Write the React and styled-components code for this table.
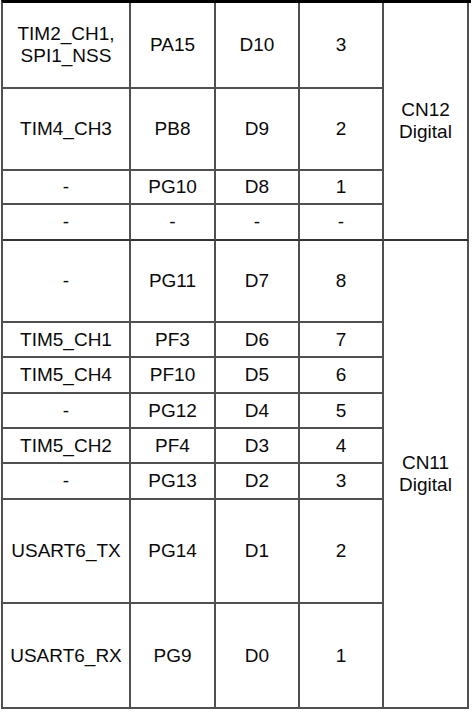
import styled, { createGlobalStyle } from 'styled-components';

const GlobalStyle = createGlobalStyle`
    body {
        margin: 0;
        background: #fff;
        font-family: 'Liberation Sans', Arial, sans-serif;
    }
`;

const PinTable = styled.div`
    display: grid;
    grid-template-columns: 128px 85px 84px 84px 85px;
    grid-template-rows: 86px 82px 34px 36px 82px 35px 36px 35px 35px 36px 104px 105px;
    width: 468px;
    margin-left: 1px;
    border-top: 3px solid #000;
    border-left: 2px solid #505050;
    box-sizing: content-box;
`;

const Cell = styled.div`
    display: flex;
    align-items: center;
    justify-content: center;
    text-align: center;
    box-sizing: border-box;
    border-right: 2px solid #505050;
    border-bottom: 2px solid ${({ $groupEnd }) => ($groupEnd ? '#333' : '#505050')};
    font-size: 19px;
    line-height: 22px;
    color: #0a0a0a;
    padding: 0 2px;
`;

const ConnectorCell = styled(Cell)`
    grid-column: 5;
    grid-row: ${({ $from, $to }) => `${$from} / ${$to}`};
`;

const cn12 = [
    ['TIM2_CH1,\nSPI1_NSS', 'PA15', 'D10', '3'],
    ['TIM4_CH3', 'PB8', 'D9', '2'],
    ['-', 'PG10', 'D8', '1'],
    ['-', '-', '-', '-'],
];

const cn11 = [
    ['-', 'PG11', 'D7', '8'],
    ['TIM5_CH1', 'PF3', 'D6', '7'],
    ['TIM5_CH4', 'PF10', 'D5', '6'],
    ['-', 'PG12', 'D4', '5'],
    ['TIM5_CH2', 'PF4', 'D3', '4'],
    ['-', 'PG13', 'D2', '3'],
    ['USART6_TX', 'PG14', 'D1', '2'],
    ['USART6_RX', 'PG9', 'D0', '1'],
];

const renderRows = (rows, startRow, groupEnd) =>
    rows.map((row, i) =>
        row.map((text, c) => (
            <Cell
                key={`${startRow + i}-${c}`}
                $groupEnd={groupEnd && i === rows.length - 1}
                style={{ gridRow: startRow + i, gridColumn: c + 1 }}
            >
                <span>
                    {text.split('\n').map((line, k) => (
                        <div key={k}>{line}</div>
                    ))}
                </span>
            </Cell>
        ))
    );

const App = () => {
    return (
        <>
            <GlobalStyle />
            <PinTable>
                {renderRows(cn12, 1, true)}
                <ConnectorCell $from={1} $to={5} $groupEnd>
                    <span>CN12<br />Digital</span>
                </ConnectorCell>
                {renderRows(cn11, 5, false)}
                <ConnectorCell $from={5} $to={13}>
                    <span>CN11<br />Digital</span>
                </ConnectorCell>
            </PinTable>
        </>
    );
};

export default App;
